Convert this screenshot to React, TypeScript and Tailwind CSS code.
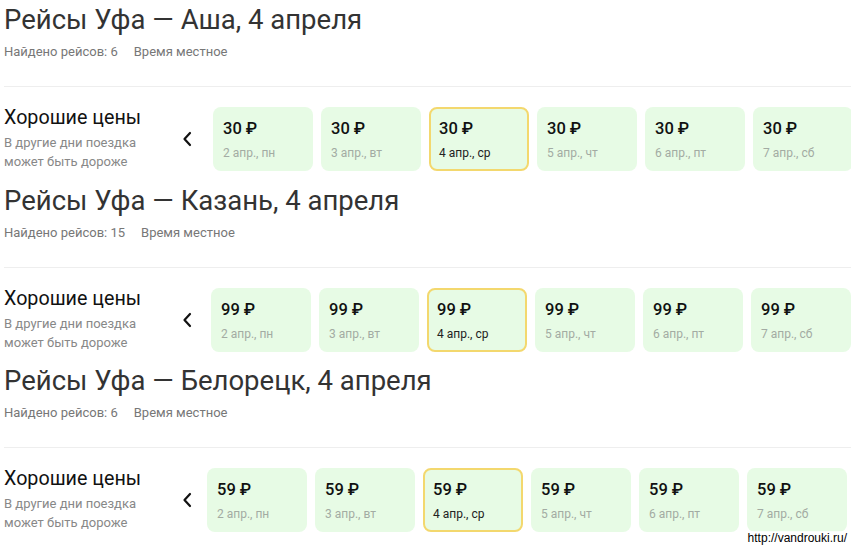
import React from 'react';

type Section = {
  city: string;
  found: number;
  price: number;
  cardsGap: string;
};

const DAYS = [
  '2 апр., пн',
  '3 апр., вт',
  '4 апр., ср',
  '5 апр., чт',
  '6 апр., пт',
  '7 апр., сб',
];

// the three blocks are slightly offset from each other in the source shot
const SECTIONS: Section[] = [
  { city: 'Аша', found: 6, price: 30, cardsGap: 'ml-[15px]' },
  { city: 'Казань', found: 15, price: 99, cardsGap: 'ml-[13px]' },
  { city: 'Белорецк', found: 6, price: 59, cardsGap: 'ml-[9px]' },
];

function Chevron() {
  return (
    <svg width="10" height="16" viewBox="0 0 10 16" className="shrink-0">
      <path d="M8 2 L2.5 8 L8 14" fill="none" stroke="#111" strokeWidth="2.2" strokeLinecap="round" strokeLinejoin="round" />
    </svg>
  );
}

function PriceCard({ price, day, active }: { price: number; day: string; active: boolean }) {
  return (
    <div
      className={
        'w-[100px] h-[64px] shrink-0 rounded-[8px] bg-[#e7fbe5] ' +
        (active ? 'border-2 border-[#f3d86e] px-[8px] pt-[10px]' : 'px-[10px] pt-[12px]')
      }
    >
      <div className="text-[16.5px] leading-[20px] font-medium text-[#111]">{price} ₽</div>
      <div className={'mt-[6px] text-[12px] leading-[16px] ' + (active ? 'text-[#222]' : 'text-[#a3aba3]')}>
        {day}
      </div>
    </div>
  );
}

function RouteBlock({ s }: { s: Section }) {
  return (
    <section className="h-[180.5px] pt-[2px]">
      <h1 className="pl-[4px] text-[27.5px] leading-[36px] font-normal text-[#333]">
        Рейсы Уфа — {s.city}, 4 апреля
      </h1>
      <div className="pl-[4px] mt-[6px] flex gap-[16px] text-[13px] leading-[16px] text-[#777]">
        <span>Найдено рейсов: {s.found}</span>
        <span>Время местное</span>
      </div>
      <div className="ml-[4px] mt-[26px] h-px bg-[#eeeeee]" />
      <div className="mt-[20px] flex items-start overflow-hidden">
        <div className="w-[176px] shrink-0 pl-[4px] -mt-[1px]">
          <div className="text-[19.7px] leading-[24px] text-[#111]">Хорошие цены</div>
          <div className="mt-[3px] text-[13px] leading-[19px] text-[#888]">
            В другие дни поездка
            <br />
            может быть дороже
          </div>
        </div>
        <div className="w-[22px] h-[64px] flex items-center justify-center shrink-0">
          <Chevron />
        </div>
        <div className={'flex gap-[8px] ' + s.cardsGap}>
          {DAYS.map((d, i) => (
            <PriceCard key={d} price={s.price} day={d} active={i === 2} />
          ))}
        </div>
      </div>
    </section>
  );
}

export default function App() {
  return (
    <div
      className="relative w-[851px] h-[549px] overflow-hidden bg-white"
      style={{ fontFamily: 'Roboto, "Noto Sans", sans-serif' }}
    >
      {SECTIONS.map((s) => (
        <RouteBlock key={s.city} s={s} />
      ))}
      <div
        className="absolute right-[4px] bottom-[4px] text-[12px] leading-[14px] text-black bg-white/80"
        style={{ fontFamily: '"Liberation Sans", Arial, sans-serif' }}
      >
        http://vandrouki.ru/
      </div>
    </div>
  );
}
